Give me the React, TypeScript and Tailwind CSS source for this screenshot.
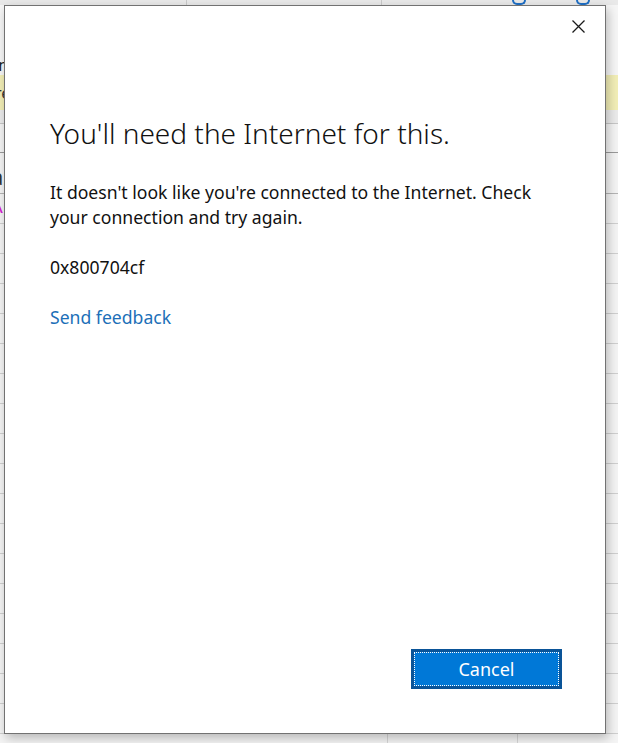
import React from "react";

const ROWS = Array.from({ length: 18 }, (_, i) => i);

function Sheet() {
  return (
    <div className="flex flex-col w-full h-full bg-[#f4f4f4]">
      <div className="h-[5px] shrink-0 bg-[#e9e9e9] flex">
        <div className="w-[187px] border-r border-[#c9c9c9]" />
        <div className="w-[195px] border-r border-[#c9c9c9]" />
        <div className="flex-1 flex gap-[50px] pl-[130px]">
          <span className="w-[14px] h-[5px] rounded-b-full border-2 border-t-0 border-[#1f6fc5]" />
          <span className="w-[14px] h-[5px] rounded-b-full border-2 border-t-0 border-[#1f6fc5]" />
        </div>
      </div>
      <div className="h-[70px] shrink-0 flex items-end pb-[2px] bg-[#f6f6f6]">
        <span className="text-[16px] leading-none text-[#222] ml-[-6px]">in</span>
      </div>
      <div className="h-[35px] shrink-0 bg-[#f2eeb6] flex items-center">
        <span className="text-[16px] leading-none text-[#333] ml-[-5px]">re</span>
      </div>
      <div className="h-[14px] shrink-0 bg-[#ebebeb] border-b border-[#c6c6c6]" />
      <div className="h-[29px] shrink-0 border-b border-[#9a9a9a]" />
      <div className="h-[41px] shrink-0 border-b border-[#b4b4b4] flex items-end">
        <span className="text-[22px] leading-none text-[#333] ml-[-9px] mb-[6px]">aS</span>
      </div>
      <div className="h-[30px] shrink-0 border-b border-[#cfcfcf] flex items-start">
        <span className="text-[20px] leading-none text-[#d41ed4] ml-[-10px] mt-[2px]">A</span>
      </div>
      {ROWS.map((r) => (
        <div key={r} className="h-[30px] shrink-0 border-b border-[#cfcfcf] flex">
          <div className="w-[388px] border-r border-[#d6d6d6]" />
          <div className="w-[130px] border-r border-[#d6d6d6]" />
        </div>
      ))}
    </div>
  );
}

export default function App() {
  return (
    <div className="relative w-[618px] h-[743px] overflow-hidden font-['Noto_Sans',sans-serif]">
      <Sheet />
      <div className="absolute left-[4px] top-[5px] w-[602px] h-[729px] bg-white border border-[#727272] shadow-[2px_4px_10px_rgba(0,0,0,0.25)] flex flex-col">
        <div className="flex justify-end pt-[14px] pr-[20px] h-[40px] shrink-0">
          <svg width="13" height="13" viewBox="0 0 13 13">
            <path d="M0.5 0.5 L12.5 12.5 M12.5 0.5 L0.5 12.5" stroke="#1a1a1a" strokeWidth="1.3" fill="none" />
          </svg>
        </div>
        <div className="pl-[45px] pt-[69px] w-[545px] flex flex-col">
          <h1 className="text-[28px] leading-[36px] font-light text-[#111]">
            You'll need the Internet for this.
          </h1>
          <p className="mt-[29px] text-[17.6px] leading-[25px] text-[#111]">
            It doesn't look like you're connected to the Internet. Check your connection and try again.
          </p>
          <p className="mt-[25px] text-[17.6px] leading-[25px] text-[#111]">0x800704cf</p>
          <a className="mt-[25px] text-[17.6px] leading-[25px] text-[#1c6fb8] w-fit">Send feedback</a>
        </div>
        <div className="mt-auto flex justify-end pr-[43px] pb-[44px]">
          <button className="w-[151px] h-[40px] bg-[#0a5498] p-[3px]">
            <span className="flex items-center justify-center w-full h-full bg-[#0078d7] border border-dotted border-white text-white text-[18px] leading-none">
              Cancel
            </span>
          </button>
        </div>
      </div>
    </div>
  );
}
